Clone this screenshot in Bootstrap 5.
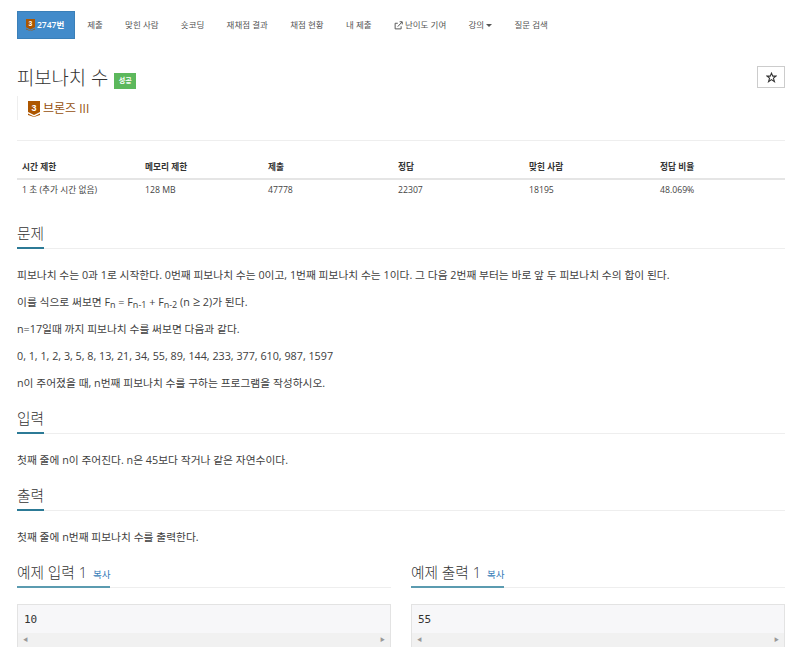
<!DOCTYPE html>
<html lang="ko">
<head>
  <meta charset="UTF-8" />
  <title>피보나치 수</title>
  <link href="https://cdn.jsdelivr.net/npm/bootstrap@5.3.3/dist/css/bootstrap.min.css" rel="stylesheet" />
  <style>
    body { font-family: "Open Sans", "Noto Sans CJK KR", sans-serif; font-size: 10.75px; color: #404040; overflow: hidden; }
    .page-wrap { padding: 11px 15px 0 17px; }
    .tab-bar { height: 28px; gap: 0; }
    .tab-bar .nav-link { font-size: 8.5px; color: #555; padding: 0 11.15px; height: 28px; line-height: 28px; display: flex; align-items: center; gap: 2px; }
    .tab-bar .nav-link.active-tab { background: #428bca; color: #fff; font-weight: 600; font-size: 8.5px; width: 58px; margin-right: 1px; padding: 0 0 0 8px; border: 1px solid #3a7fb8; }
    .tab-bar .dropdown-toggle::after { margin-left: 0; border-top-width: 3px; border-left-width: 3px; border-right-width: 3px; vertical-align: 1px; }
    .title-row { margin-top: 27px; height: 30px; }
    .prob-title { font-size: 18.8px; font-weight: 300; line-height: 24px; margin: 0; color: #333; }
    .ok-badge { background: #5cb85c; color: #fff; font-size: 7px; font-weight: 700; width: 22px; height: 16px; margin: 7px 0 0 6px; display: flex; align-items: center; justify-content: center; }
    .star-btn { width: 28px; height: 22px; border: 1px solid #ccc; background: #fff; padding: 0; display: flex; align-items: center; justify-content: center; }
    .tier-row { height: 24px; border-left: 1px solid #eee; padding: 2px 0 0 10px; font-size: 12px; color: #96500c; gap: 3px; }
    .soft-rule { margin: 20px 0 0; border: 0; border-top: 1px solid #eee; opacity: 1; }
    .stat-table { margin: 16px 0 0; font-size: 8.7px; table-layout: fixed; width: 100%; }
    .stat-table th, .stat-table td { padding: 0 0 0 5px; color: #333; box-shadow: none; }
    .stat-table th { height: 22px; padding-top: 1px; font-weight: 700; border-bottom: 2px solid #e5e5e5; vertical-align: middle; }
    .stat-table td { height: 22px; padding-top: 1px; border-bottom: 0; vertical-align: middle; color: #444; }
    .sect-head { border-bottom: 1px solid #eee; height: 27px; }
    .sect-head h2 { display: inline-block; margin: 0; height: 27px; font-size: 14.7px; line-height: 23px; font-weight: 300; border-bottom: 2px solid #2c7a96; color: #333; }
    .sample-cols .sect-head h2 { border-bottom-color: #5b9bb0; }
    .sect-head .copy-link { font-size: 9.5px; font-weight: 400; color: #337ab7; margin-left: 2px; text-decoration: none; }
    .sect-body { margin-top: 18px; }
    .sect-body p { margin: 0 0 11px; line-height: 16px; }
    .sect-body sub { font-size: 9px; }
    .math-op { font-size: 13px; line-height: 10px; }
    .block-gap { margin-top: 16px; }
    .top-gap { margin-top: 21px; }
    .sample-box { margin-top: 16px; height: 43px; border: 1px solid #e3e3e3; background: #f7f7f9; }
    .sample-text { height: 28px; padding: 8px 0 0 6px; font-family: "DejaVu Sans Mono", monospace; font-size: 11px; color: #333; line-height: 14px; }
    .fake-scroll { height: 14px; background: #f1f1f1; padding: 0 5px; font-size: 5px; color: #999; }
    .sample-cols { column-gap: 20px; display: grid; grid-template-columns: 374px 374px; }
  </style>
</head>
<body>
<div class="page-wrap">

  <!-- 상단 탭 -->
  <ul class="nav tab-bar">
    <li class="nav-item">
      <a class="nav-link active-tab" href="#">
        <svg width="9" height="12" viewBox="0 0 12 16"><path d="M0 0H12V11L6 14L0 11Z" fill="#ad5600"/><path d="M0 12.5L6 15.5L12 12.5V14L6 16L0 14Z" fill="#ad5600"/><text x="6" y="9.5" font-size="9" font-weight="700" text-anchor="middle" fill="#fff" font-family="Liberation Sans">3</text></svg>
        2747번
      </a>
    </li>
    <li class="nav-item"><a class="nav-link" href="#">제출</a></li>
    <li class="nav-item"><a class="nav-link" href="#">맞힌 사람</a></li>
    <li class="nav-item"><a class="nav-link" href="#">숏코딩</a></li>
    <li class="nav-item"><a class="nav-link" href="#">재채점 결과</a></li>
    <li class="nav-item"><a class="nav-link" href="#">채점 현황</a></li>
    <li class="nav-item"><a class="nav-link" href="#">내 제출</a></li>
    <li class="nav-item">
      <a class="nav-link" href="#">
        <svg width="9" height="9" viewBox="0 0 12 12" fill="none" stroke="#555" stroke-width="1.3"><path d="M9.5 7V10.5H1.5V3H5"/><path d="M5 7.5L10.5 1.5M7.5 1H11V4.5"/></svg>
        난이도 기여
      </a>
    </li>
    <li class="nav-item"><a class="nav-link dropdown-toggle" href="#">강의</a></li>
    <li class="nav-item"><a class="nav-link" href="#">질문 검색</a></li>
  </ul>

  <!-- 제목 -->
  <div class="d-flex title-row">
    <h1 class="prob-title">피보나치 수</h1>
    <span class="ok-badge">성공</span>
    <button class="star-btn ms-auto" type="button">
      <svg width="11" height="11" viewBox="0 0 24 24" fill="none" stroke="#333" stroke-width="2.4"><path d="M12 2.5L14.8 9H22L16.2 13.4L18.4 21L12 16.5L5.6 21L7.8 13.4L2 9H9.2Z"/></svg>
    </button>
  </div>
  <div class="d-flex align-items-center tier-row">
    <svg width="12" height="16" viewBox="0 0 12 16"><path d="M0 0H12V11L6 14L0 11Z" fill="#ad5600"/><path d="M0 12.5L6 15.5L12 12.5V14L6 16L0 14Z" fill="#ad5600"/><text x="6" y="9.5" font-size="9" font-weight="700" text-anchor="middle" fill="#fff" font-family="Liberation Sans">3</text></svg>
    <span>브론즈 III</span>
  </div>
  <hr class="soft-rule">

  <!-- 제한 표 -->
  <table class="table stat-table">
    <colgroup><col style="width:123px"><col style="width:123px"><col style="width:130px"><col style="width:131px"><col style="width:131px"><col></colgroup>
    <thead><tr><th>시간 제한</th><th>메모리 제한</th><th>제출</th><th>정답</th><th>맞힌 사람</th><th>정답 비율</th></tr></thead>
    <tbody><tr><td>1 초 (추가 시간 없음)</td><td>128 MB</td><td>47778</td><td>22307</td><td>18195</td><td>48.069%</td></tr></tbody>
  </table>

  <section class="top-gap">
    <div class="sect-head"><h2>문제</h2></div>
    <div class="sect-body">
      <p>피보나치 수는 0과 1로 시작한다. 0번째 피보나치 수는 0이고, 1번째 피보나치 수는 1이다. 그 다음 2번째 부터는 바로 앞 두 피보나치 수의 합이 된다.</p>
      <p>이를 식으로 써보면 F<sub>n</sub> = F<sub>n-1</sub> + F<sub>n-2</sub> (n <span class="math-op">≥</span> 2)가 된다.</p>
      <p>n=17일때 까지 피보나치 수를 써보면 다음과 같다.</p>
      <p>0, 1, 1, 2, 3, 5, 8, 13, 21, 34, 55, 89, 144, 233, 377, 610, 987, 1597</p>
      <p>n이 주어졌을 때, n번째 피보나치 수를 구하는 프로그램을 작성하시오.</p>
    </div>
  </section>

  <section class="block-gap">
    <div class="sect-head"><h2>입력</h2></div>
    <div class="sect-body"><p>첫째 줄에 n이 주어진다. n은 45보다 작거나 같은 자연수이다.</p></div>
  </section>

  <section class="block-gap">
    <div class="sect-head"><h2>출력</h2></div>
    <div class="sect-body"><p>첫째 줄에 n번째 피보나치 수를 출력한다.</p></div>
  </section>

  <div class="sample-cols block-gap">
    <div>
      <div class="sect-head"><h2>예제 입력 1 <a class="copy-link" href="#">복사</a></h2></div>
      <div class="sample-box">
        <div class="sample-text">10</div>
        <div class="fake-scroll d-flex justify-content-between align-items-center"><span>◀</span><span>▶</span></div>
      </div>
    </div>
    <div>
      <div class="sect-head"><h2>예제 출력 1 <a class="copy-link" href="#">복사</a></h2></div>
      <div class="sample-box">
        <div class="sample-text">55</div>
        <div class="fake-scroll d-flex justify-content-between align-items-center"><span>◀</span><span>▶</span></div>
      </div>
    </div>
  </div>
</div>
<script src="https://cdn.jsdelivr.net/npm/bootstrap@5.3.3/dist/js/bootstrap.bundle.min.js"></script>
</body>
</html>
